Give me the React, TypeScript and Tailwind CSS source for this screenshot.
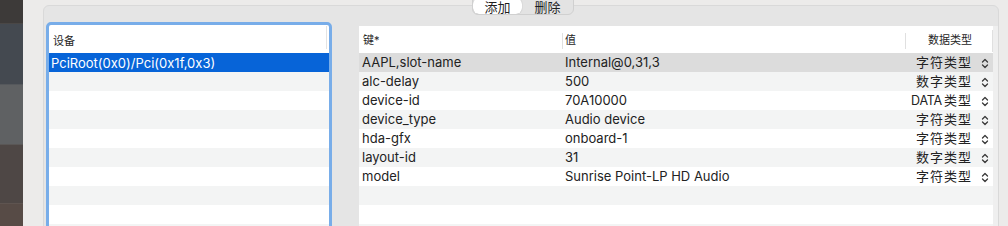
import React from "react";

const font = { fontFamily: "Inter, 'Noto Sans CJK SC', sans-serif" };

const rows = [
  { key: "AAPL,slot-name", value: "Internal@0,31,3", type: "字符类型" },
  { key: "alc-delay", value: "500", type: "数字类型" },
  { key: "device-id", value: "70A10000", type: "类型", prefix: "DATA" },
  { key: "device_type", value: "Audio device", type: "字符类型" },
  { key: "hda-gfx", value: "onboard-1", type: "字符类型" },
  { key: "layout-id", value: "31", type: "数字类型" },
  { key: "model", value: "Sunrise Point-LP HD Audio", type: "字符类型" },
  { key: "", value: "", type: "" },
  { key: "", value: "", type: "" },
  { key: "", value: "", type: "" },
];

function UpDown() {
  return (
    <svg width="8" height="11" viewBox="0 0 8 11" fill="none" stroke="#3a3a3a" strokeWidth="1.3" strokeLinecap="round" strokeLinejoin="round">
      <path d="M1.5 4 L4 1.5 L6.5 4" />
      <path d="M1.5 7 L4 9.5 L6.5 7" />
    </svg>
  );
}

export default function App() {
  return (
    <div className="w-[1008px] h-[226px] overflow-hidden flex bg-[#ecebea]" style={font}>
      {/* window behind */}
      <div className="w-[23px] shrink-0 flex flex-col">
        <div className="h-[24px] bg-[#3d3a39] border-b border-[#4a4746]" />
        <div className="h-[61px] bg-[#444950] border-b border-[#55585c]" />
        <div className="h-[60px] bg-[#5f6163] border-b border-[#5a5756]" />
        <div className="h-[59px] bg-[#4e4745] border-b border-[#5e5450]" />
        <div className="flex-1 bg-[#574b46]" />
      </div>

      <div className="flex-1 relative pl-[20px] pt-[5px] pr-[9px]">
        {/* segmented control */}
        <div className="absolute left-[449px] -top-[3px] flex h-[18px] rounded-b-[6px] border border-[#d0d0d0] bg-[#e3e3e3] overflow-hidden text-[13px] leading-[13px] text-[#1f1f1f] z-10">
          <div className="w-[49px] bg-white rounded-[6px] shadow-[0_0_1px_rgba(0,0,0,0.35)] flex justify-center pt-[3px]">添加</div>
          <div className="w-[51px] flex justify-center pt-[3px]">删除</div>
        </div>

        <div className="h-[240px] rounded-t-[6px] border border-[#d9d9d9] bg-[#e5e5e5] flex pl-[2px] pt-[16px]">
          {/* device list */}
          <div className="w-[286px] h-[230px] rounded-[5px] border-[3px] border-[#78ade9] bg-white flex flex-col overflow-hidden">
            <div className="h-[28px] shrink-0 flex items-center pl-[4px] pr-[2px] text-[11px] text-[#262626]">
              <span className="flex-1 pt-[4px]">设备</span>
              <span className="w-px h-[23px] bg-[#e3e3e3] -mt-[4px]" />
            </div>
            <div className="h-[19px] shrink-0 bg-[#0764d8] text-white text-[13px] leading-[19px] pt-[1px] pl-[2px]">
              PciRoot(0x0)/Pci(0x1f,0x3)
            </div>
            {Array.from({ length: 9 }).map((_, i) => (
              <div key={i} className={`h-[19px] shrink-0 ${i % 2 === 0 ? "bg-[#f3f4f4]" : "bg-white"}`} />
            ))}
          </div>

          {/* properties table */}
          <div className="ml-[27px] mt-[4px] w-[634px] flex flex-col">
            <div className="h-[27px] shrink-0 bg-white flex items-center text-[11px] text-[#262626]">
              <div className="w-[203px] pl-[4px] pt-[2px]">键*</div>
              <span className="w-px h-[16px] bg-[#e0e0e0] mt-[2px]" />
              <div className="w-[342px] pl-[2px] pt-[2px]">值</div>
              <span className="w-px h-[16px] bg-[#e0e0e0] mt-[2px]" />
              <div className="flex-1 text-center pt-[2px] pl-[2px]">数据类型</div>
              <span className="w-px h-[22px] bg-[#e0e0e0] mt-[2px]" />
            </div>
            {rows.map((r, i) => (
              <div
                key={i}
                className={`h-[19px] shrink-0 flex items-center pt-[1px] text-[13px] text-[#222] ${
                  i === 0 ? "bg-[#dcdcdc]" : i % 2 === 1 ? "bg-[#f3f4f4]" : "bg-white"
                }`}
              >
                <div className="w-[203px] pl-[3px] whitespace-nowrap">{r.key}</div>
                <div className="w-[343px] pl-[3px] whitespace-nowrap">{r.value}</div>
                <div className="flex-1 flex items-center justify-end pr-[4px] gap-[9px]">
                  {r.type && (
                    <>
                      <span className="whitespace-nowrap">
                        {r.prefix && <span className="text-[12.5px] tracking-[-0.2px] mr-[2px]">{r.prefix}</span>}
                        <span className="tracking-[1px]">{r.type}</span>
                      </span>
                      <UpDown />
                    </>
                  )}
                </div>
              </div>
            ))}
          </div>
          <div className="flex-1 bg-[#efefef] mt-[4px]" />
        </div>
      </div>
    </div>
  );
}
